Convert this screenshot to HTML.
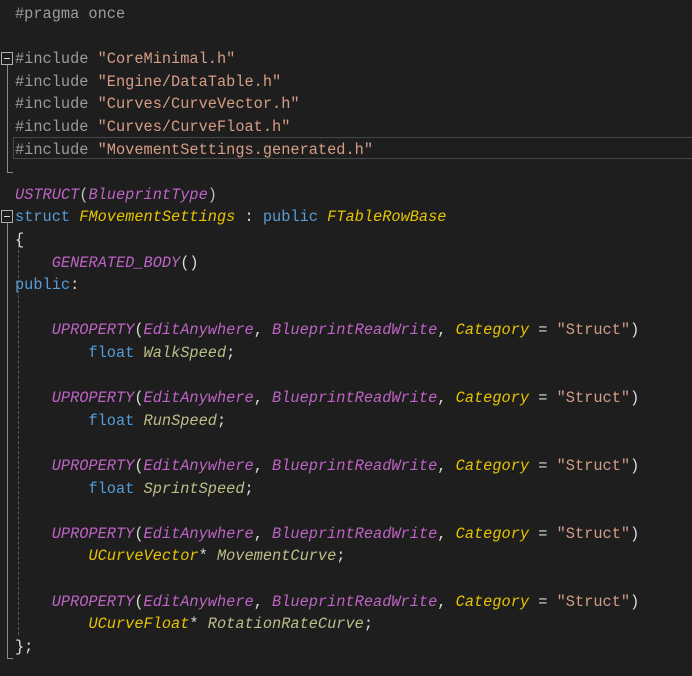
<!DOCTYPE html>
<html><head><meta charset="utf-8"><style>
html,body{margin:0;padding:0;background:#1e1e1e;width:692px;height:674px;overflow:hidden}
.l{position:absolute;left:15px;height:22.6px;line-height:22.6px;white-space:pre;font-family:"Liberation Mono","Noto Sans CJK SC",monospace;font-size:15.3px;color:#dcdcdc}
.p{color:#9b9b9b}.s{color:#d69d85}.k{color:#569cd6}.m{color:#bd63c5;font-style:italic}
.t{color:#e6c300;font-style:italic}.v{color:#bdbd8a;font-style:italic}.g{color:#c0c0c0}
.box{position:absolute;left:1px;width:10px;height:11px;border:1px solid #b0b0b0}
.box:after{content:"";position:absolute;left:2px;top:5px;width:6px;height:1px;background:#d8d8d8}
.vl{position:absolute;left:7px;width:1px;background:#8a8a8a}
.tk{position:absolute;left:7px;width:6px;height:1px;background:#8a8a8a}
#c{position:absolute;left:0;top:2px;width:692px;height:674px}
</style></head><body>
<div style="position:absolute;left:13px;top:137px;width:690px;height:20px;border:1px solid #464646"></div>
<div class="box" style="top:52px"></div>
<div class="vl" style="top:65px;height:108px"></div><div class="tk" style="top:172px"></div>
<div class="box" style="top:210px"></div>
<div class="vl" style="top:223px;height:436px"></div><div class="tk" style="top:658px"></div>
<div style="position:absolute;left:18px;top:240px;height:395px;border-left:1px dashed #5a5a5a"></div>
<div id="c">
<div class="l p" style="top:1px">#pragma once</div>
<div class="l" style="top:46.2px"><span class="p">#include </span><span class="s">"CoreMinimal.h"</span></div>
<div class="l" style="top:68.8px"><span class="p">#include </span><span class="s">"Engine/DataTable.h"</span></div>
<div class="l" style="top:91.4px"><span class="p">#include </span><span class="s">"Curves/CurveVector.h"</span></div>
<div class="l" style="top:114px"><span class="p">#include </span><span class="s">"Curves/CurveFloat.h"</span></div>
<div class="l" style="top:136.6px"><span class="p">#include </span><span class="s">"MovementSettings.generated.h"</span></div>
<div class="l" style="top:181.8px"><span class="m">USTRUCT</span><span class="g">(</span><span class="m">BlueprintType</span><span class="g">)</span></div>
<div class="l" style="top:204.4px"><span class="k">struct</span> <span class="t">FMovementSettings</span> : <span class="k">public</span> <span class="t">FTableRowBase</span></div>
<div class="l" style="top:227px">{</div>
<div class="l" style="top:249.6px">    <span class="m">GENERATED_BODY</span>()</div>
<div class="l" style="top:272.2px"><span class="k">public</span>:</div>
<div class="l" style="top:317.4px">    <span class="m">UPROPERTY</span>(<span class="m">EditAnywhere</span>, <span class="m">BlueprintReadWrite</span>, <span class="t">Category</span> = <span class="s">"Struct"</span>)</div>
<div class="l" style="top:340px">        <span class="k">float</span> <span class="v">WalkSpeed</span>;</div>
<div class="l" style="top:385.2px">    <span class="m">UPROPERTY</span>(<span class="m">EditAnywhere</span>, <span class="m">BlueprintReadWrite</span>, <span class="t">Category</span> = <span class="s">"Struct"</span>)</div>
<div class="l" style="top:407.8px">        <span class="k">float</span> <span class="v">RunSpeed</span>;</div>
<div class="l" style="top:453px">    <span class="m">UPROPERTY</span>(<span class="m">EditAnywhere</span>, <span class="m">BlueprintReadWrite</span>, <span class="t">Category</span> = <span class="s">"Struct"</span>)</div>
<div class="l" style="top:475.6px">        <span class="k">float</span> <span class="v">SprintSpeed</span>;</div>
<div class="l" style="top:520.8px">    <span class="m">UPROPERTY</span>(<span class="m">EditAnywhere</span>, <span class="m">BlueprintReadWrite</span>, <span class="t">Category</span> = <span class="s">"Struct"</span>)</div>
<div class="l" style="top:543.4px">        <span class="t">UCurveVector</span>* <span class="v">MovementCurve</span>;</div>
<div class="l" style="top:588.6px">    <span class="m">UPROPERTY</span>(<span class="m">EditAnywhere</span>, <span class="m">BlueprintReadWrite</span>, <span class="t">Category</span> = <span class="s">"Struct"</span>)</div>
<div class="l" style="top:611.2px">        <span class="t">UCurveFloat</span>* <span class="v">RotationRateCurve</span>;</div>
<div class="l" style="top:633.8px">};</div>
</div>
</body></html>
